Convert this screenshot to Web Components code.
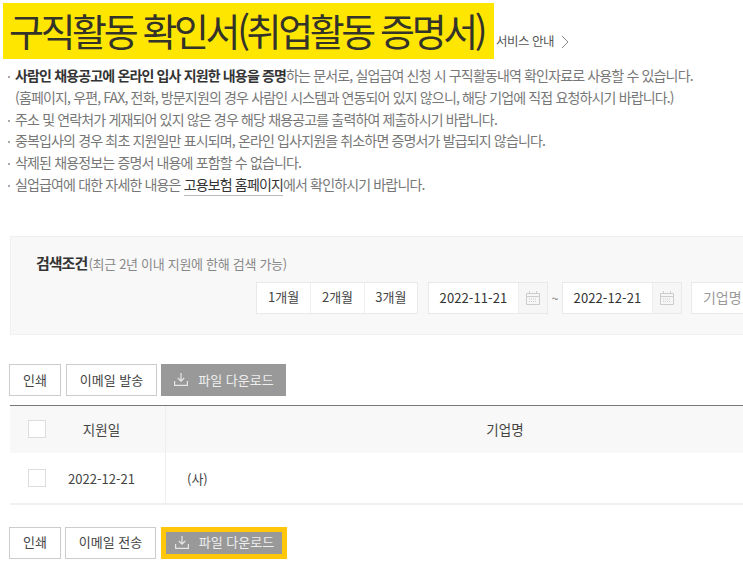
<!DOCTYPE html>
<html lang="ko">
<head>
<meta charset="utf-8">
<title>구직활동 확인서</title>
<style>
html, body {
    margin: 0;
    background: #fff;
    overflow: hidden;
}
body {
    width: 743px;
    height: 566px;
    font-family: "Noto Sans CJK KR", "Noto Sans", sans-serif;
}
</style>
</head>
<body>
<cert-page></cert-page>
<script>
const FONT = `"Noto Sans CJK KR", "Noto Sans", sans-serif`;

customElements.define('cert-title', class extends HTMLElement {
    connectedCallback() {
        this.attachShadow({mode: 'open'}).innerHTML = `
<style>
:host {
    display: flex;
    align-items: flex-end;
    padding: 3px 0 0 3px;
    font-family: ${FONT};
}
h1 {
    margin: 0;
    height: 56px;
    box-sizing: border-box;
    width: 491px;
    padding: 0 0 0 6px;
    background: #ffe600;
    color: #33332a;
    font-size: 38px;
    font-weight: 400;
    line-height: 54px;
    letter-spacing: -3.4px;
    white-space: nowrap;
}
a {
    display: flex;
    align-items: center;
    gap: 7px;
    height: 24px;
    margin: 0 0 7px 2px;
    color: #555;
    font-size: 12.5px;
    letter-spacing: -0.5px;
}
svg {
    display: block;
    margin-top: 4px;
}
</style>
<h1>구직활동 확인서(취업활동 증명서)</h1>
<a>서비스 안내<svg width="8" height="14" viewBox="0 0 8 14"><path d="M1 1l6 6-6 6" fill="none" stroke="#888" stroke-width="1"/></svg></a>`;
    }
});

customElements.define('cert-notice', class extends HTMLElement {
    connectedCallback() {
        this.attachShadow({mode: 'open'}).innerHTML = `
<style>
:host {
    display: block;
    padding: 6px 0 0 7px;
    color: #777;
    font-family: ${FONT};
    font-size: 14px;
    line-height: 21.8px;
    letter-spacing: -0.85px;
    white-space: nowrap;
}
ul {
    margin: 0;
    padding: 0;
    list-style: none;
}
li {
    position: relative;
    padding-left: 8px;
}
li.bullet::before {
    content: "";
    position: absolute;
    left: 1px;
    top: 11px;
    width: 2px;
    height: 2px;
    background: #aaa;
}
b {
    color: #333;
    font-weight: 700;
}
a {
    color: #333;
    border-bottom: 1px solid #bbb;
    padding-bottom: 1px;
}
</style>
<ul>
    <li class="bullet"><b>사람인 채용공고에 온라인 입사 지원한 내용을 증명</b>하는 문서로, 실업급여 신청 시 구직활동내역 확인자료로 사용할 수 있습니다.</li>
    <li>(홈페이지, 우편, FAX, 전화, 방문지원의 경우 사람인 시스템과 연동되어 있지 않으니, 해당 기업에 직접 요청하시기 바랍니다.)</li>
    <li class="bullet">주소 및 연락처가 게재되어 있지 않은 경우 해당 채용공고를 출력하여 제출하시기 바랍니다.</li>
    <li class="bullet">중복입사의 경우 최초 지원일만 표시되며, 온라인 입사지원을 취소하면 증명서가 발급되지 않습니다.</li>
    <li class="bullet">삭제된 채용정보는 증명서 내용에 포함할 수 없습니다.</li>
    <li class="bullet">실업급여에 대한 자세한 내용은 <a>고용보험 홈페이지</a>에서 확인하시기 바랍니다.</li>
</ul>`;
    }
});

customElements.define('date-field', class extends HTMLElement {
    connectedCallback() {
        this.attachShadow({mode: 'open'}).innerHTML = `
<style>
:host {
    display: flex;
    box-sizing: border-box;
    width: 120px;
    height: 32px;
    background: #fff;
    border: 1px solid #e9e9e9;
    color: #333;
    font-size: 13px;
}
span {
    flex: 1;
    text-align: center;
    line-height: 30px;
    letter-spacing: 0.1px;
}
i {
    display: flex;
    align-items: center;
    justify-content: center;
    width: 28px;
    background: #f6f6f6;
    border-left: 1px solid #eee;
}
</style>
<span><slot></slot></span>
<i><svg width="14" height="14" viewBox="0 0 14 14" fill="none" stroke="#ccc"><path d="M.5 2.5h13v11H.5zM.5 5.5h13M3.500 0v3M10.500 0v3"/><path d="M3 8h8M3 10.500h8" stroke-dasharray="1 1"/></svg></i>`;
    }
});

customElements.define('search-box', class extends HTMLElement {
    connectedCallback() {
        this.attachShadow({mode: 'open'}).innerHTML = `
<style>
:host {
    display: block;
    box-sizing: border-box;
    width: 900px;
    height: 99px;
    margin: 40px 0 0 10px;
    padding: 15px 0 0 25px;
    background: #f8f8f8;
    border: 1px solid #f0f0f0;
    font-family: ${FONT};
}
h2 {
    margin: 0;
    font-size: 15px;
    line-height: 22px;
    font-weight: 700;
    letter-spacing: -1px;
    color: #333;
}
h2 small {
    font-size: 13px;
    font-weight: 400;
    letter-spacing: -0.3px;
    color: #888;
    margin-left: -2px;
}
.filters {
    display: flex;
    align-items: center;
    margin: 7px 0 0 220px;
}
.range {
    display: flex;
    height: 32px;
    box-sizing: border-box;
    background: #fff;
    border: 1px solid #e9e9e9;
    margin-right: 10px;
}
.range span {
    box-sizing: border-box;
    width: 53.33px;
    color: #444;
    font-size: 13px;
    line-height: 28px;
    text-align: center;
    letter-spacing: 0;
    border-left: 1px solid #eee;
}
.range span:first-child {
    border-left: 0;
}
.tilde {
    width: 14px;
    text-align: center;
    color: #777;
    font-size: 12px;
}
.company {
    box-sizing: border-box;
    width: 120px;
    height: 32px;
    margin-left: 9px;
    padding-left: 11px;
    background: #fff;
    border: 1px solid #e9e9e9;
    color: #999;
    font-size: 14px;
    line-height: 29px;
}
</style>
<h2>검색조건 <small>(최근 2년 이내 지원에 한해 검색 가능)</small></h2>
<div class="filters">
    <div class="range"><span>1개월</span><span>2개월</span><span>3개월</span></div>
    <date-field>2022-11-21</date-field>
    <div class="tilde">~</div>
    <date-field>2022-12-21</date-field>
    <div class="company">기업명</div>
</div>`;
    }
});

customElements.define('action-button', class extends HTMLElement {
    connectedCallback() {
        const download = this.hasAttribute('download');
        this.attachShadow({mode: 'open'}).innerHTML = `
<style>
:host {
    display: flex;
    align-items: center;
    justify-content: center;
    box-sizing: border-box;
    height: 32px;
    border: 1px solid #ccc;
    background: #fff;
    color: #444;
    font-size: 13px;
    letter-spacing: 0;
    gap: 10px;
}
:host([download]) {
    background: #999;
    border-color: #999;
    color: #eee;
    padding-left: 1px;
}
span {
    margin-top: var(--label-lift, 0);
}
svg {
    display: block;
}
</style>
${download ? `<svg width="14" height="13" viewBox="0 0 14 13" fill="none" stroke="#e6e6e6" stroke-width="1.2"><path d="M7 0v8M3.800 5L7 8.200 10.200 5M.6 8v4.400h12.800V8"/></svg>` : ''}
<span><slot></slot></span>`;
    }
});

customElements.define('button-bar', class extends HTMLElement {
    connectedCallback() {
        this.attachShadow({mode: 'open'}).innerHTML = `
<style>
:host {
    display: flex;
    gap: 5px;
    padding-left: 9px;
    font-family: ${FONT};
}
</style>
<slot></slot>`;
    }
});

customElements.define('apply-table', class extends HTMLElement {
    connectedCallback() {
        this.attachShadow({mode: 'open'}).innerHTML = `
<style>
:host {
    display: grid;
    grid-template-columns: 37px 119px 678px;
    grid-template-rows: 47px 50px;
    width: 834px;
    margin: 9px 0 0 10px;
    border-top: 1px solid #777;
    border-bottom: 2px solid #f0f0f0;
    color: #444;
    font-family: ${FONT};
    font-size: 13px;
}
div {
    display: flex;
    align-items: center;
    justify-content: center;
}
.head {
    background: #f8f8f8;
    font-size: 13.5px;
}
.check {
    justify-content: flex-start;
}
.check i {
    display: block;
    box-sizing: border-box;
    flex: none;
    width: 18px;
    height: 18px;
    margin-left: 18px;
    background: #fff;
    border: 1px solid #ddd;
}
.date {
    padding-right: 9px;
    border-right: 1px solid #eee;
}
.company {
    justify-content: flex-start;
    padding-left: 21px;
}
.center {
    justify-content: center;
    padding: 0;
}
span {
    padding-top: 1px;
}
</style>
<div class="head check"><i></i></div>
<div class="head date">지원일</div>
<div class="head company center">기업명</div>
<div class="check"><i></i></div>
<div class="date"><span>2022-12-21</span></div>
<div class="company"><span>(사)</span></div>`;
    }
});

customElements.define('cert-page', class extends HTMLElement {
    connectedCallback() {
        this.attachShadow({mode: 'open'}).innerHTML = `
<style>
:host {
    display: block;
    width: 743px;
    height: 566px;
    overflow: hidden;
    font-family: ${FONT};
}
.top {
    margin-top: 29px;
}
.bottom {
    margin-top: 22px;
    --label-lift: -2px;
}
.print { width: 52px; }
.mail { width: 91px; }
.file { width: 125px; }
.mark {
    box-sizing: border-box;
    width: 126px;
    height: 32px;
    border: 5px solid #ffc60a;
}
.mark action-button {
    height: 22px;
}
</style>
<cert-title></cert-title>
<cert-notice></cert-notice>
<search-box></search-box>
<button-bar class="top">
    <action-button class="print">인쇄</action-button>
    <action-button class="mail">이메일 발송</action-button>
    <action-button class="file" download style="margin-left:-1px">파일 다운로드</action-button>
</button-bar>
<apply-table></apply-table>
<button-bar class="bottom">
    <action-button class="print">인쇄</action-button>
    <action-button class="mail" style="margin-left:-1px">이메일 전송</action-button>
    <div class="mark"><action-button download>파일 다운로드</action-button></div>
</button-bar>`;
    }
});
</script>
</body>
</html>
